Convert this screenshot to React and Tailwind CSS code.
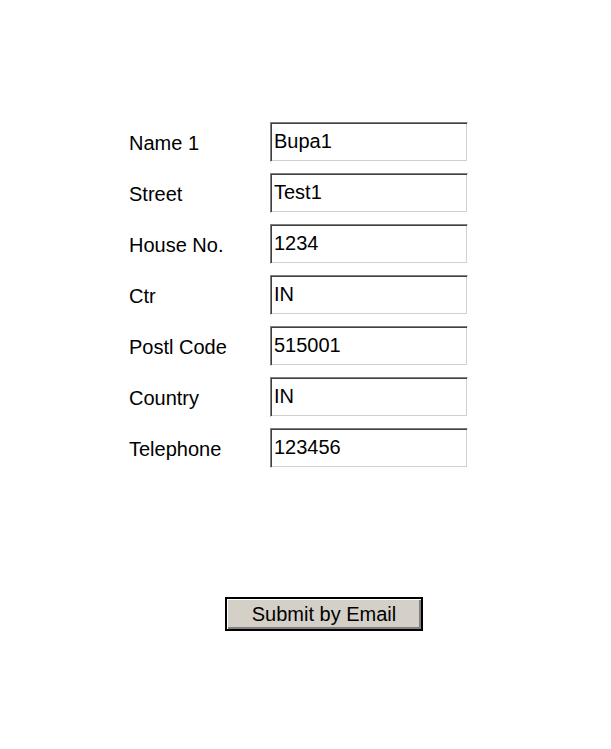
const fields = [
  { label: 'Name 1', value: 'Bupa1' },
  { label: 'Street', value: 'Test1' },
  { label: 'House No.', value: '1234' },
  { label: 'Ctr', value: 'IN' },
  { label: 'Postl Code', value: '515001' },
  { label: 'Country', value: 'IN' },
  { label: 'Telephone', value: '123456' },
];

export default function App() {
  return (
    <div className="min-h-[749px] w-[611px] bg-white font-['Liberation_Sans',Arial,sans-serif] text-[20px] text-black">
      <form className="pt-[122px] pl-[129px]" onSubmit={(e) => e.preventDefault()}>
        <div className="flex flex-col gap-[11px]">
          {fields.map((f) => (
            <div key={f.label} className="flex items-center">
              <label className="w-[141px] pt-[2px] leading-none">{f.label}</label>
              <input
                type="text"
                defaultValue={f.value}
                className="h-[40px] w-[198px] border border-t-[#808080] border-l-[#808080] border-r-white border-b-white bg-white px-[3px] pb-[2px] text-[20px] leading-none outline-none shadow-[inset_1px_1px_0_#404040,inset_-1px_-1px_0_#d4d0c8]"
              />
            </div>
          ))}
        </div>

        {/* submit */}
        <div className="mt-[129px] pl-[96px]">
          <button
            type="submit"
            className="h-[34px] w-[198px] border-2 border-black bg-[#d4d0c8] text-[20px] leading-none shadow-[inset_1px_1px_0_#fff,inset_-2px_-2px_0_#808080]"
          >
            Submit by Email
          </button>
        </div>
      </form>
    </div>
  );
}
